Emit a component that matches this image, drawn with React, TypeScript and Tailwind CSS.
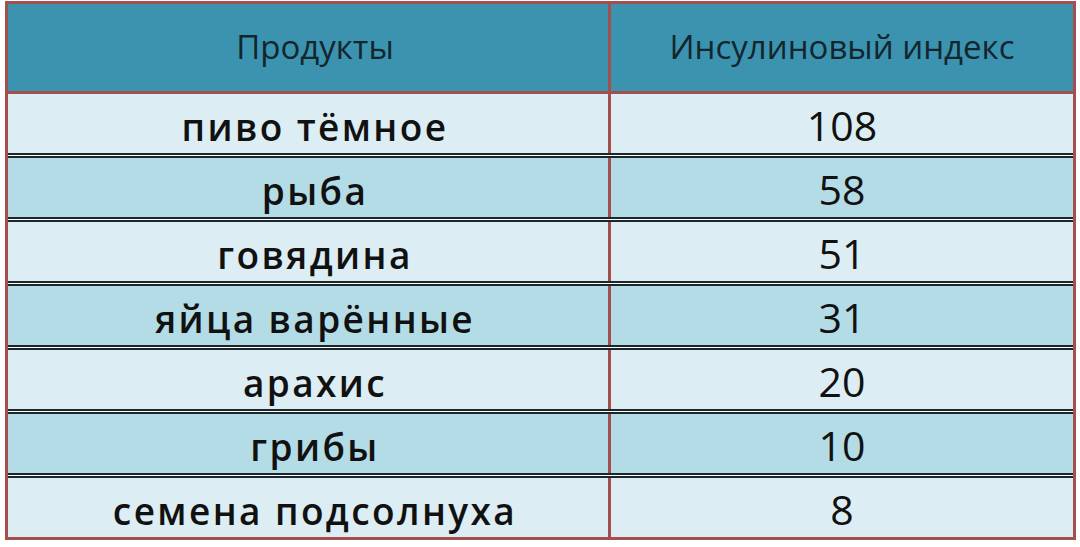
import React from 'react';

const rows = [
  { name: 'пиво тёмное', value: '108' },
  { name: 'рыба', value: '58' },
  { name: 'говядина', value: '51' },
  { name: 'яйца варённые', value: '31' },
  { name: 'арахис', value: '20' },
  { name: 'грибы', value: '10' },
  { name: 'семена подсолнуха', value: '8' },
];

export default function App() {
  return (
    <div className="w-[1080px] h-[547px] bg-white pt-[1px] pl-[5px]" style={{ fontFamily: '"Open Sans", "Noto Sans", sans-serif' }}>
      <div className="w-[1071px] border-[3px] border-[#a24f4d] bg-[#a24f4d]">
        {/* Шапка */}
        <div className="grid grid-cols-[603px_1fr] h-[90px] bg-[#3b93b0] border-b-[3px] border-[#a24f4d] text-[#13262d]">
          <div className="flex items-center justify-center border-r-[3px] border-[#a24f4d] text-[33px] pl-[14px] pb-[2px]">
            Продукты
          </div>
          <div className="flex items-center justify-center text-[33px] pb-[2px]">
            Инсулиновый индекс
          </div>
        </div>

        {rows.map((r, i) => (
          <div key={r.name}>
            {i > 0 && <div className="h-[5px] bg-white border-y-2 border-[#1c272c]" />}
            <div className={`grid grid-cols-[603px_1fr] grid-rows-[59px] h-[59px] text-[#111] ${i % 2 === 0 ? 'bg-[#dcedf3]' : 'bg-[#b4dce6]'}`}>
              <div className="flex items-center justify-center border-r-[3px] border-[#a24f4d] text-[37px] leading-none font-semibold tracking-[0.065em] pl-[14px] pt-[5px]">
                {r.name}
              </div>
              <div className="flex items-center justify-center text-[41px] leading-none font-medium pt-[4px]">
                {r.value}
              </div>
            </div>
          </div>
        ))}
      </div>
    </div>
  );
}
